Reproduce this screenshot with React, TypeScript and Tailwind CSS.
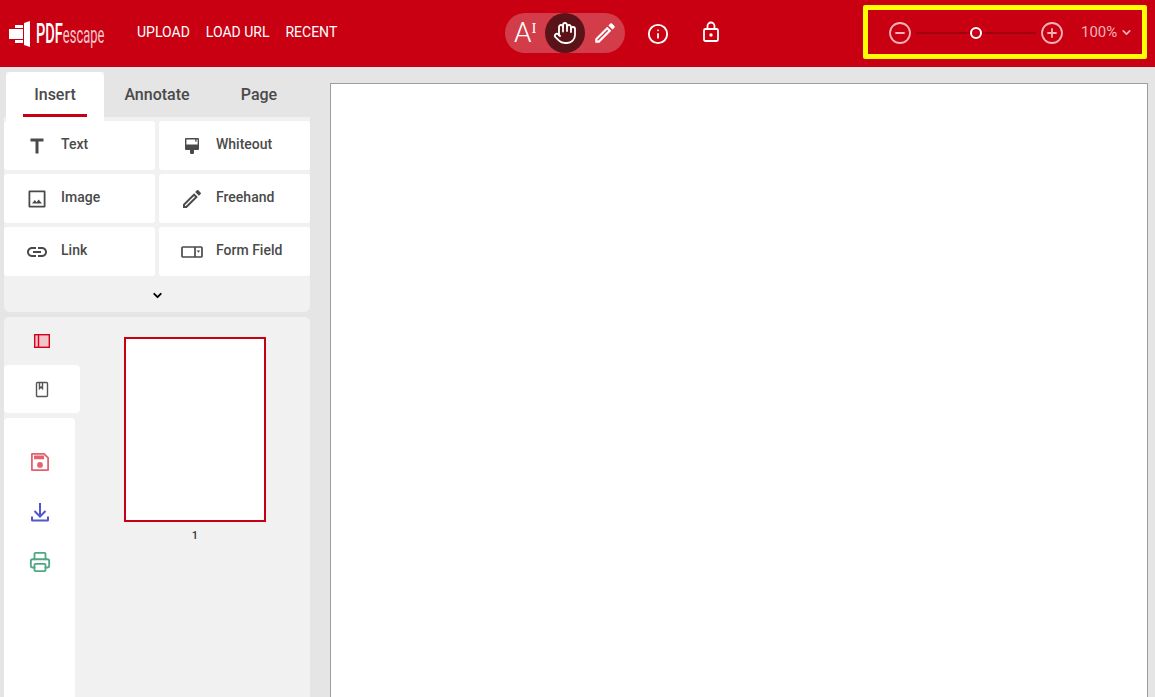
import { ChevronDown, CircleMinus, CirclePlus, Hand, Info, Printer } from 'lucide-react'
import type { ReactNode } from 'react'

const editPath =
  'M14.06 9.02l.92.92L5.92 19H5v-.92l9.06-9.06M17.66 3c-.25 0-.51.1-.7.29l-1.83 1.83 3.75 3.75 1.83-1.83c.39-.39.39-1.02 0-1.41l-2.34-2.34c-.2-.2-.45-.29-.71-.29zm-3.6 3.19L3 17.25V21h3.75L17.81 9.94l-3.75-3.75z'

function Logo() {
  return (
    <div className="flex items-center">
      <svg width="22" height="26" viewBox="0 0 22 26" className="fill-white">
        <rect x="0" y="8" width="14" height="10" />
        <rect x="6" y="4" width="8" height="3" />
        <rect x="6" y="19" width="8" height="3" />
        <polygon points="15,2 21,0 21,26 15,24" />
      </svg>
      <div className="w-[62px] ml-[5px] h-[34px] relative">
        <span className="absolute left-0 top-0 origin-left scale-x-[0.54] whitespace-nowrap text-[27px] leading-[34px] font-medium text-white">
          PDF<span className="font-normal text-[#f5c6cb] text-[24px]">escape</span>
        </span>
      </div>
    </div>
  )
}

function Tool({ icon, label }: { icon: ReactNode; label: string }) {
  return (
    <div className="h-[49px] bg-white rounded-[3px] flex items-center pl-[21px] gap-[12px]">
      <div className="w-[24px] flex justify-center pt-[1px]">{icon}</div>
      <span className="text-[14px] font-medium text-[#4a4a4a] -mt-[3px]">{label}</span>
    </div>
  )
}

const toolIcon = 'fill-[#4a4a4a]'

export default function App() {
  return (
    <div className="h-[697px] overflow-hidden bg-[#e5e5e5] flex flex-col font-['Roboto',sans-serif]">
      <header className="h-[67px] shrink-0 bg-[#c80012] flex items-center pl-[9px]">
        <Logo />
        <nav className="flex gap-4 ml-[39px] -mt-[3px] text-[14px] text-white">
          <span>UPLOAD</span>
          <span>LOAD URL</span>
          <span>RECENT</span>
        </nav>
        <div className="ml-[168px] -mt-[1px] w-[120px] h-[40px] rounded-full bg-[#d33c49] flex items-center">
          <div className="w-[40px] flex justify-center items-baseline text-white">
            <span className="text-[28px] leading-none font-light">A</span>
            <span className="text-[15px] leading-none font-['Liberation_Serif',serif] -translate-y-[9px]">I</span>
          </div>
          <div className="w-[40px] h-[40px] rounded-full bg-[#5a1319] flex items-center justify-center">
            <Hand size={24} strokeWidth={1.8} className="text-white" />
          </div>
          <div className="w-[40px] flex justify-center">
            <svg width="26" height="26" viewBox="0 0 24 24" className="fill-white">
              <path d={editPath} />
            </svg>
          </div>
        </div>
        <Info size={22} strokeWidth={2} className="text-white ml-[22px]" />
        <svg width="20" height="24" viewBox="0 0 20 24" fill="none" className="ml-[32px] -mt-[3px] stroke-white" strokeWidth="1.8">
          <rect x="3" y="9" width="14" height="12" rx="1.5" />
          <path d="M6.5 9V6a3.5 3.5 0 0 1 7 0v3" />
          <circle cx="10" cy="15" r="1.7" className="fill-white" stroke="none" />
        </svg>
        <div className="ml-auto mr-[8px] w-[284px] h-[54px] -mt-[3px] border-[5px] border-[#ffff00] rounded-[2px] flex items-center pl-[20px] pt-[1px]">
          <CircleMinus size={24} strokeWidth={1.8} className="text-[#f2b3b8]" />
          <div className="w-[120px] ml-[4px] h-[2px] bg-[#a20010] relative">
            <div className="absolute left-[54px] -top-[5px] w-[12px] h-[12px] rounded-full border-[2px] border-white bg-[#c80012]" />
          </div>
          <CirclePlus size={24} strokeWidth={1.8} className="text-[#f2b3b8] ml-[4px]" />
          <span className="ml-[17px] text-[15px] text-[#f2b3b8]">100%</span>
          <ChevronDown size={13} strokeWidth={3} className="text-[#f2b3b8] ml-[3px]" />
        </div>
      </header>

      <div className="flex-1 flex min-h-0">
        <aside className="w-[306px] ml-1 shrink-0 flex flex-col">
          <div className="mt-[5px] h-[240px] bg-[#f1f1f1] rounded-b-[6px] flex flex-col">
            <div className="h-[49px] flex items-start text-[16px] font-medium text-[#4a4a4a]">
              <div className="w-[2px] h-[45px] bg-[#e5e5e5]" />
              <div className="w-[98px] h-[49px] bg-white rounded-t-[5px] relative flex justify-center pt-[11px]">
                Insert
                <div className="absolute left-[17px] bottom-[4px] w-[64px] h-[3px] bg-[#c80012]" />
              </div>
              <div className="w-[106px] h-[45px] bg-[#e5e5e5] flex justify-center pt-[11px]">Annotate</div>
              <div className="w-[100px] h-[45px] bg-[#e5e5e5] flex justify-center pt-[11px] pr-[2px]">Page</div>
            </div>
            <div className="grid grid-cols-[151px_151px] gap-x-[4px] gap-y-[4px]">
              <Tool
                label="Text"
                icon={
                  <svg width="24" height="24" viewBox="0 0 24 24" className={toolIcon}>
                    <path d="M5.5 4.5v3h5v12h3v-12h5v-3z" />
                  </svg>
                }
              />
              <Tool
                label="Whiteout"
                icon={
                  <svg width="14" height="16" viewBox="0 0 14 16" className={toolIcon}>
                    <path fillRule="evenodd" d="M1 0h12a1 1 0 0 1 1 1v10a1 1 0 0 1-1 1H9v3a1 1 0 0 1-1 1H6a1 1 0 0 1-1-1v-3H1a1 1 0 0 1-1-1V1a1 1 0 0 1 1-1zM1.4 1.4v5.2h11.2V1.4h-1.1v2.4h-1.3V1.4z" />
                  </svg>
                }
              />
              <Tool
                label="Image"
                icon={
                  <svg width="18" height="18" viewBox="0 0 18 18" className={toolIcon}>
                    <path fillRule="evenodd" d="M1.5.5h15a1 1 0 0 1 1 1v15a1 1 0 0 1-1 1h-15a1 1 0 0 1-1-1v-15a1 1 0 0 1 1-1zM2.3 2.3v13.4h13.4V2.3z" />
                    <path d="M4 13.5l2.8-3.4 1.8 2.1 2-2.8 3.4 4.1z" />
                  </svg>
                }
              />
              <Tool
                label="Freehand"
                icon={
                  <svg width="24" height="24" viewBox="0 0 24 24" className={toolIcon}>
                    <path d={editPath} />
                  </svg>
                }
              />
              <Tool
                label="Link"
                icon={
                  <svg width="24" height="24" viewBox="0 0 24 24" className={toolIcon}>
                    <path d="M3.9 12c0-1.71 1.39-3.1 3.1-3.1h4V7H7c-2.76 0-5 2.24-5 5s2.24 5 5 5h4v-1.9H7c-1.71 0-3.1-1.39-3.1-3.1zM8 13h8v-2H8v2zm9-6h-4v1.9h4c1.71 0 3.1 1.39 3.1 3.1s-1.39 3.1-3.1 3.1h-4V17h4c2.76 0 5-2.24 5-5s-2.24-5-5-5z" />
                  </svg>
                }
              />
              <Tool
                label="Form Field"
                icon={
                  <svg width="22" height="12" viewBox="0 0 22 12" fill="none" className="stroke-[#4a4a4a]" strokeWidth="1.7">
                    <rect x="1" y="1" width="20" height="10" rx="1" />
                    <path d="M14 1v10" />
                    <path d="M15.6 4.6h3.6l-1.8 2.2z" className="fill-[#4a4a4a]" stroke="none" />
                  </svg>
                }
              />
            </div>
            <div className="flex-1 flex justify-center items-center pt-[3px]">
              <ChevronDown size={13} strokeWidth={3.5} className="text-black" />
            </div>
          </div>

          <div className="mt-[5px] flex-1 min-h-0 bg-[#f1f1f1] rounded-t-[5px] flex">
            <div className="w-[76px] shrink-0 flex flex-col">
              <div className="h-[48px] flex items-center justify-center pr-[1px]">
                <svg width="16" height="14" viewBox="0 0 16 14" className="fill-[#f3c4c8] stroke-[#d6001c]" strokeWidth="1.4">
                  <rect x="0.7" y="0.7" width="14.6" height="12.6" />
                  <path d="M4.5 0.7v12.6" />
                </svg>
              </div>
              <div className="h-[48px] bg-white rounded-[4px] flex items-center justify-center pr-[1px]">
                <svg width="14" height="17" viewBox="0 0 14 17" fill="none" className="stroke-[#555555]" strokeWidth="1.4">
                  <rect x="1.5" y="1.5" width="11" height="14" rx="1" />
                  <path d="M4.5 1.5v6l1.5-1.5 1.5 1.5v-6" />
                </svg>
              </div>
              <div className="mt-[5px] w-[71px] flex-1 bg-white rounded-t-[4px] flex flex-col items-center pt-[32px] gap-[26px]">
                <svg width="24" height="24" viewBox="0 0 24 24" className="fill-[#e2626e]">
                  <path fillRule="evenodd" d="M4 3h12.5L21 7.5V20a1 1 0 0 1-1 1H4a1 1 0 0 1-1-1V4a1 1 0 0 1 1-1zm.8 1.8v14.4h14.4V8.3l-3.5-3.5zM6 5.5h10v3.7H6zM12 12a2.9 2.9 0 1 1 0 5.8 2.9 2.9 0 0 1 0-5.8z" />
                </svg>
                <svg width="24" height="24" viewBox="0 0 24 24" fill="none" className="stroke-[#5257c8]" strokeWidth="2">
                  <path d="M12 3v13M6.5 11l5.5 5.5 5.5-5.5M4 16.5V20a.5.5 0 0 0 .5.5h15a.5.5 0 0 0 .5-.5v-3.5" />
                </svg>
                <div className="w-[24px] h-[24px] flex items-center justify-center">
                  <Printer size={22} strokeWidth={2} className="text-[#4fa785]" />
                </div>
              </div>
            </div>
            <div className="flex-1 flex flex-col items-center pt-[20px] px-[4px]">
              <div className="w-[142px] h-[185px] bg-white border-2 border-[#c80012]" />
              <span className="mt-[6px] text-[11px] font-medium text-[#333333]">1</span>
            </div>
          </div>
        </aside>

        <main className="flex-1 pl-[20px] pr-[7px] pt-[16px] min-w-0">
          <div className="h-[700px] bg-white border border-[#9e9e9e]" />
        </main>
      </div>
    </div>
  )
}
